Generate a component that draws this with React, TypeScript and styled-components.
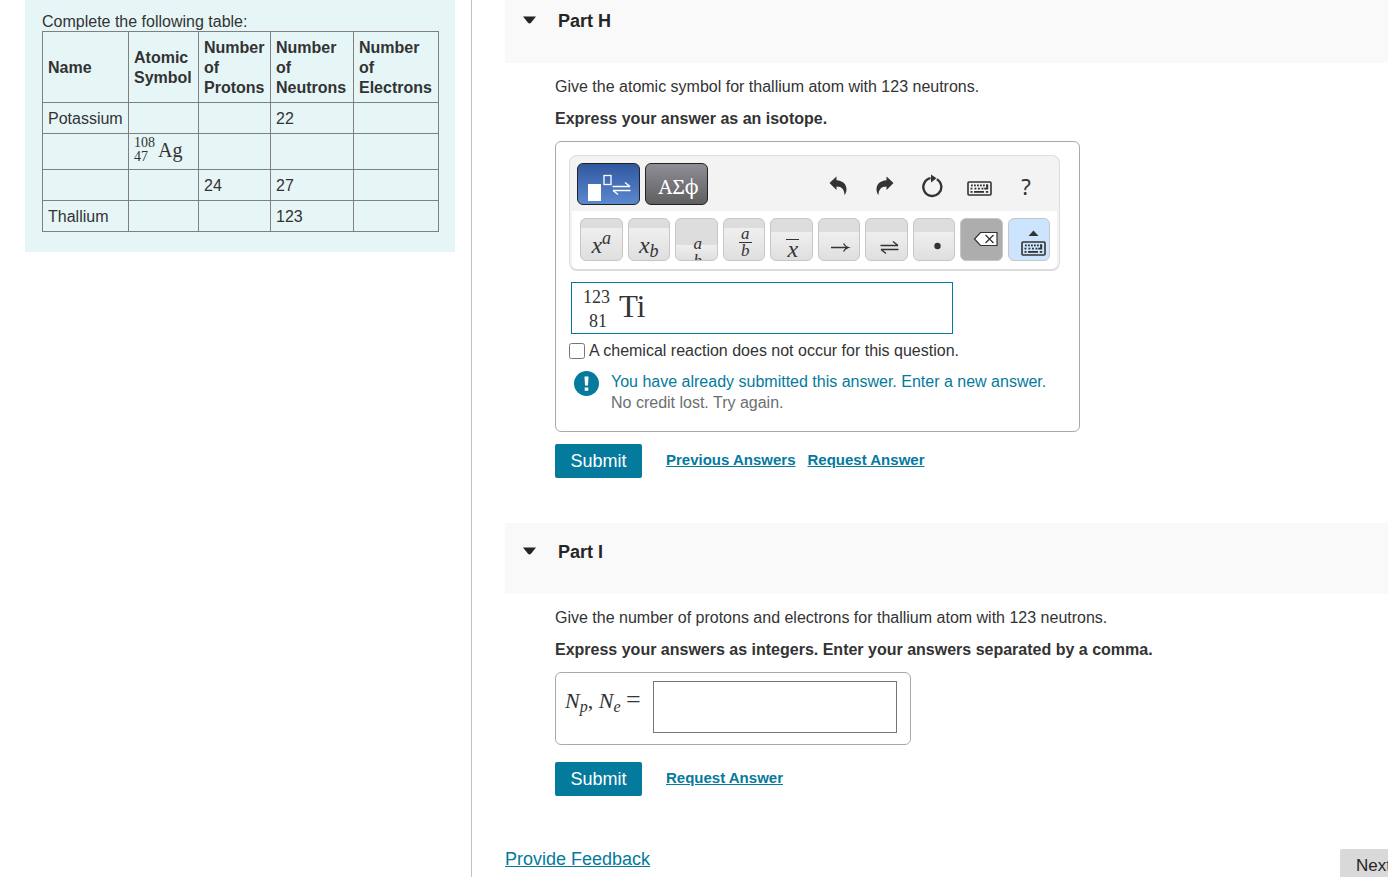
import React from "react";
import styled, { createGlobalStyle, css } from "styled-components";

const TEAL = "#047a9c";
const INK = "#333333";
const SERIF = '"Liberation Serif", "Times New Roman", serif';

const GlobalStyle = createGlobalStyle`
  *, *::before, *::after { box-sizing: border-box; }
  body {
    margin: 0;
    background: #ffffff;
    color: ${INK};
    font-family: "Liberation Sans", Arial, sans-serif;
    font-size: 16px;
    line-height: 20px;
  }
  button, input { font: inherit; color: inherit; }
  p, h2 { margin: 0; }
`;

const Page = styled.div`
  display: flex;
  height: 100vh;
  overflow: hidden;
`;

const Sidebar = styled.aside`
  flex: 0 0 472px;
  padding: 0 16px 0 25px;
  border-right: 1px solid #b9c3ce;
`;

const ProblemPanel = styled.section`
  padding: 12px 16px 20px 17px;
  background: #e6f6f7;
`;

const Intro = styled.p`
  line-height: 19px;
`;

const AtomTable = styled.table`
  width: 100%;
  table-layout: fixed;
  border-collapse: collapse;

  th, td {
    height: 31px;
    padding: 6px 5px 4px;
    border: 1px solid #808080;
    text-align: left;
    vertical-align: middle;
  }
`;

const Col = styled.col<{ $w: number }>`
  width: ${(p) => p.$w}px;
`;

const Isotope = styled.span`
  display: flex;
  align-items: center;
  gap: 3px;
  height: 25px;
  padding-bottom: 5px;
  font-family: ${SERIF};
  font-size: 20px;
`;

const IsotopeNumbers = styled.span`
  display: flex;
  flex-direction: column;
  font-size: 14px;
  line-height: 14px;
`;

const Main = styled.main`
  flex: 1;
  min-width: 0;
  margin-top: -8px;
  padding-left: 33px;
  overflow: hidden;
`;

const PartHeader = styled.header`
  display: flex;
  align-items: flex-start;
  height: 71px;
  padding: 18px;
  background: #f9f9f9;
`;

const PartToggle = styled.button`
  display: flex;
  align-items: center;
  gap: 22px;
  padding: 0;
  border: 0;
  background: none;
  color: #252525;
  font-size: 18px;
  font-weight: bold;
  line-height: 22px;
`;

const PartBody = styled.div`
  padding: 14px 16px 0 50px;
`;

const Prompt = styled.p`
  margin-bottom: 12px;
`;

const Instruction = styled.p`
  margin-bottom: 12px;
  font-weight: bold;
`;

const AnswerBox = styled.div<{ $w: number }>`
  max-width: ${(p) => p.$w}px;
  border: 1px solid #aaaaaa;
  border-radius: 6px;
`;

const EquationBox = styled(AnswerBox)`
  height: 291px;
  padding: 13px 19px 0 13px;
`;

const IntegerBox = styled(AnswerBox)`
  display: flex;
  gap: 12px;
  height: 73px;
  padding: 8px 13px 0 9px;
`;

const Palette = styled.div`
  height: 116px;
  padding: 0 2px;
  border: 1px solid #dddddd;
  border-bottom-width: 2px;
  border-radius: 8px;
  background: #f3f3f3;
`;

const PaletteTop = styled.div`
  display: flex;
  align-items: center;
  gap: 5px;
  height: 55px;
  padding: 0 5px;
`;

const ModeButton = styled.button<{ $active?: boolean }>`
  display: flex;
  justify-content: center;
  width: 63px;
  height: 42px;
  padding: 7px 0 0 4px;
  border: 1px solid #222222;
  border-radius: 6px;
  background: linear-gradient(#8f8d96, #5f5f61);
  color: #ffffff;
  font-family: "Noto Serif", "DejaVu Serif", ${SERIF};
  font-size: 20px;
  line-height: 32px;
  ${(p) =>
    p.$active &&
    css`
      padding: 8px 0 0;
      background: linear-gradient(#30589f, #5c88d0);
    `}
`;

const ToolGroup = styled.div`
  display: flex;
  gap: 7px;
  margin-left: auto;
  padding: 4px 6px 0 0;
`;

const ToolButton = styled.button`
  display: grid;
  place-items: center;
  width: 40px;
  height: 32px;
  padding: 0;
  border: 0;
  background: none;
  font-family: "Noto Sans", sans-serif;
  font-size: 22px;
`;

const PaletteKeys = styled.div`
  display: grid;
  grid-template-columns: repeat(10, 1fr);
  gap: 5px;
  height: 58px;
  padding: 7px 7px 0 8px;
  border-radius: 0 0 6px 6px;
  background: #ffffff;
`;

const Key = styled.button<{ $split?: number; $fill?: string }>`
  display: flex;
  justify-content: center;
  height: 43px;
  padding: 0;
  overflow: hidden;
  border: 1px solid #c6c6c6;
  border-radius: 6px;
  background: ${(p) =>
    p.$fill ??
    `linear-gradient(#dddddd ${p.$split ?? 13}px, #efefef ${p.$split ?? 13}px, #dfdfdf)`};
  font-family: ${SERIF};
  font-style: italic;
  font-size: 24px;

  sup, sub { font-size: 18px; line-height: 0; }
  sub { vertical-align: -4px; }
`;

const KeyLabel = styled.span`
  padding-top: 16px;
`;

const Fraction = styled.span<{ $bar?: boolean; $top: number }>`
  display: flex;
  flex-direction: column;
  align-items: center;
  width: 13px;
  margin: ${(p) => p.$top}px 0 0 3px;
  font-size: 17px;
  line-height: 16px;

  span + span {
    width: 100%;
    border-top: 1px solid ${(p) => (p.$bar ? INK : "transparent")};
  }
`;

const BarredLetter = styled.span`
  font-size: 24px;
  line-height: 18px;
`;

const KeyIcon = styled.svg`
  flex: none;
`;

const EquationField = styled.div`
  display: flex;
  gap: 9px;
  max-width: 382px;
  height: 52px;
  margin: 11px 0 0 2px;
  padding: 2px 11px;
  border: 1px solid ${TEAL};
  font-family: ${SERIF};
  font-size: 31px;
  line-height: 44px;
`;

const FieldNumbers = styled.span`
  display: flex;
  flex-direction: column;
  align-items: flex-end;
  font-size: 18px;
  line-height: 24px;

  span + span { padding-right: 3px; }
`;

const CheckRow = styled.label`
  display: flex;
  align-items: center;
  gap: 4px;
  margin-top: 7px;

  input { width: 16px; height: 16px; margin: 0; }
`;

const Feedback = styled.div`
  display: flex;
  gap: 12px;
  margin: 10px 0 0 5px;
  line-height: 21px;
  color: ${TEAL};

  svg { flex: none; }
`;

const FeedbackNote = styled.p`
  color: #6a7070;
`;

const Actions = styled.div<{ $top: number; $bottom: number }>`
  display: flex;
  align-items: center;
  margin: ${(p) => p.$top}px 0 ${(p) => p.$bottom}px;
`;

const SubmitButton = styled.button`
  width: 87px;
  height: 34px;
  margin-right: 24px;
  padding: 0;
  border: 0;
  border-radius: 2px;
  background: ${TEAL};
  color: #ffffff;
  font-size: 18px;
`;

const ActionLink = styled.a`
  margin-right: 12px;
  padding-bottom: 2px;
  color: ${TEAL};
  font-size: 15px;
  font-weight: bold;
`;

const MathLabel = styled.label`
  padding-top: 7px;
  font-family: ${SERIF};
  font-size: 22px;
  line-height: 26px;
  white-space: nowrap;

  sub { font-size: 16px; line-height: 0; vertical-align: -4px; }
`;

const EqualsSign = styled.span`
  font-size: 26px;
  line-height: 0;
`;

const IntegerInput = styled.input`
  flex: 1;
  min-width: 0;
  height: 52px;
  padding: 0 8px;
  border: 1px solid #767676;
  background: #ffffff;
`;

const Footer = styled.footer`
  display: flex;
  justify-content: space-between;
  align-items: flex-start;
  margin-right: -38px;
`;

const FeedbackLink = styled.a`
  color: ${TEAL};
  font-size: 18px;
`;

const NextButton = styled.button`
  width: 86px;
  height: 34px;
  padding: 0 16px;
  border: 0;
  border-radius: 2px;
  background: #d9d9d9;
  color: #252525;
  font-size: 17px;
  text-align: left;
  white-space: nowrap;
`;

const Keyboard = ({ x = 0, y = 0 }: { x?: number; y?: number }) => (
  <g transform={`translate(${x} ${y})`} fill={INK}>
    <rect x="1" y="1" width="23" height="13" rx="1" fill="none" stroke={INK} strokeWidth="1.6" />
    {[4, 7, 10, 13, 16, 19].map((k) => (
      <rect key={k} x={k} y="3.5" width="1.8" height="1.8" />
    ))}
    {[3.5, 7.5, 11, 14.5].map((k) => (
      <rect key={k} x={k} y="6.7" width="1.9" height="1.8" />
    ))}
    <path d="M19.2 3.5h2v5h-4v-1.8h2z" />
    <rect x="3.5" y="10" width="2" height="1.8" />
    <rect x="7" y="10" width="10" height="1.8" />
    <rect x="18.8" y="10" width="2.4" height="1.8" />
  </g>
);

const CurvedArrow = ({ flip }: { flip?: boolean }) => (
  <svg width="18" height="20" viewBox="0 0 18 20" aria-hidden="true">
    <path
      transform={flip ? "translate(18 0) scale(-1 1)" : undefined}
      d="M0.5 7 7.5 0.5v3.8c6.5 0.4 10 4 10 9.2 0 2.2-.8 4.2-2 5.5-.2-5.5-2.5-8.2-8-8.4v3.400z"
      fill={INK}
    />
  </svg>
);

const Harpoons = ({ x, y, color }: { x: number; y: number; color: string }) => (
  <g transform={`translate(${x} ${y})`} stroke={color} strokeWidth="1.4" fill="none">
    <path d="M0.5 4.5H18M13 0.5 18 4.5M18.500 8.500H1M6 12.500 1 8.500" />
  </g>
);

const PartTitle = ({ children }: { children: React.ReactNode }) => (
  <PartHeader>
    <h2>
      <PartToggle type="button" aria-expanded="true">
        <svg width="13" height="10" viewBox="0 0 13 10" aria-hidden="true">
          <path d="M0 .5h13L8 6.800q-1.500 1.400-3 0z" fill="#252525" />
        </svg>
        {children}
      </PartToggle>
    </h2>
  </PartHeader>
);

const rows: React.ReactNode[][] = [
  ["Potassium", "", "", "22", ""],
  [
    "",
    <Isotope>
      <IsotopeNumbers>
        <span>108</span>
        <span>47</span>
      </IsotopeNumbers>
      Ag
    </Isotope>,
    "",
    "",
    "",
  ],
  ["", "", "24", "27", ""],
  ["Thallium", "", "", "123", ""],
];

const headings = ["Name", "Atomic Symbol", "Number of Protons", "Number of Neutrons", "Number of Electrons"];

export default function App() {
  return (
    <>
      <GlobalStyle />
      <Page>
        <Sidebar>
          <ProblemPanel>
            <Intro>Complete the following table:</Intro>
            <AtomTable>
              <colgroup>
                {[86, 70, 72, 83, 85].map((w, i) => (
                  <Col key={i} $w={w} />
                ))}
              </colgroup>
              <thead>
                <tr>
                  {headings.map((h) => (
                    <th key={h} scope="col">{h}</th>
                  ))}
                </tr>
              </thead>
              <tbody>
                {rows.map((cells, r) => (
                  <tr key={r}>
                    {cells.map((c, i) => (
                      <td key={i}>{c}</td>
                    ))}
                  </tr>
                ))}
              </tbody>
            </AtomTable>
          </ProblemPanel>
        </Sidebar>

        <Main>
          <PartTitle>Part H</PartTitle>
          <PartBody>
            <Prompt>Give the atomic symbol for thallium atom with 123 neutrons.</Prompt>
            <Instruction>Express your answer as an isotope.</Instruction>
            <EquationBox $w={525}>
              <Palette>
                <PaletteTop>
                  <ModeButton type="button" $active aria-label="Templates">
                    <KeyIcon width="61" height="32" aria-hidden="true">
                      <rect x="10" y="12" width="13" height="17" fill="#fff" />
                      <rect x="26" y="3.500" width="7" height="9" fill="none" stroke="#fff" strokeWidth="1.300" />
                      <Harpoons x={34} y={10} color="#fff" />
                    </KeyIcon>
                  </ModeButton>
                  <ModeButton type="button">ΑΣϕ</ModeButton>
                  <ToolGroup>
                    <ToolButton type="button" aria-label="Undo"><CurvedArrow /></ToolButton>
                    <ToolButton type="button" aria-label="Redo"><CurvedArrow flip /></ToolButton>
                    <ToolButton type="button" aria-label="Reset">
                      <svg width="22" height="24" viewBox="0 0 22 24" aria-hidden="true">
                        <path d="M15.800 5.200A9 9 0 1 1 9.500 4.200" fill="none" stroke={INK} strokeWidth="2.400" />
                        <path d="M10 .5 15.500 4.300 10 8.500z" fill={INK} />
                      </svg>
                    </ToolButton>
                    <ToolButton type="button" aria-label="Keyboard shortcuts">
                      <svg width="25" height="21" aria-hidden="true"><Keyboard y={6} /></svg>
                    </ToolButton>
                    <ToolButton type="button" aria-label="Help">?</ToolButton>
                  </ToolGroup>
                </PaletteTop>
                <PaletteKeys>
                  <Key type="button" $split={9}><KeyLabel>x<sup>a</sup></KeyLabel></Key>
                  <Key type="button" $split={9}><KeyLabel>x<sub>b</sub></KeyLabel></Key>
                  <Key type="button" $split={26}>
                    <Fraction $top={17}><span>a</span><span>b</span></Fraction>
                  </Key>
                  <Key type="button" $split={9}>
                    <Fraction $top={7} $bar><span>a</span><span>b</span></Fraction>
                  </Key>
                  <Key type="button">
                    <Fraction $top={4} $bar><span>&nbsp;</span><BarredLetter>x</BarredLetter></Fraction>
                  </Key>
                  <Key type="button" aria-label="Right arrow">
                    <KeyIcon width="40" height="42" aria-hidden="true">
                      <path d="M12 28.500h17M24.500 24.500q1.500 3 5 4-3.500 1-5 4" fill="none" stroke={INK} strokeWidth="1.300" />
                    </KeyIcon>
                  </Key>
                  <Key type="button" aria-label="Equilibrium arrows">
                    <KeyIcon width="40" height="42" aria-hidden="true"><Harpoons x={14} y={22} color={INK} /></KeyIcon>
                  </Key>
                  <Key type="button" aria-label="Dot">
                    <KeyIcon width="40" height="42" aria-hidden="true"><circle cx="23.500" cy="27" r="3.200" fill={INK} /></KeyIcon>
                  </Key>
                  <Key type="button" $fill="#adadad" aria-label="Delete">
                    <KeyIcon width="40" height="42" aria-hidden="true">
                      <path d="M19.500 13.500H36v13H19.500l-6-6.500z" fill="#fff" stroke={INK} strokeWidth="1.200" />
                      <path d="m24.500 16 8 8m0-8-8 8" stroke={INK} strokeWidth="1.300" />
                    </KeyIcon>
                  </Key>
                  <Key type="button" $fill="#cce4fe" aria-label="Show keyboard">
                    <KeyIcon width="40" height="42" aria-hidden="true">
                      <path d="m19.500 17 5-5.500 5 5.500z" fill={INK} />
                      <Keyboard x={12} y={22} />
                    </KeyIcon>
                  </Key>
                </PaletteKeys>
              </Palette>
              <EquationField role="textbox" tabIndex={0} aria-label="Isotope answer">
                <FieldNumbers>
                  <span>123</span>
                  <span>81</span>
                </FieldNumbers>
                Ti
              </EquationField>
              <CheckRow>
                <input type="checkbox" />
                A chemical reaction does not occur for this question.
              </CheckRow>
              <Feedback role="status">
                <svg width="25" height="25" viewBox="0 0 25 25" aria-hidden="true">
                  <circle cx="12.5" cy="12.5" r="12.5" fill={TEAL} />
                  <path d="M10.500 5.500h4l-.5 9h-3zM10.700 16.500h3.600v3.300h-3.600z" fill="#fff" />
                </svg>
                <div>
                  <p>You have already submitted this answer. Enter a new answer.</p>
                  <FeedbackNote>No credit lost. Try again.</FeedbackNote>
                </div>
              </Feedback>
            </EquationBox>
            <Actions $top={12} $bottom={45}>
              <SubmitButton type="button">Submit</SubmitButton>
              <ActionLink href="#previous">Previous Answers</ActionLink>
              <ActionLink href="#request-h">Request Answer</ActionLink>
            </Actions>
          </PartBody>

          <PartTitle>Part I</PartTitle>
          <PartBody>
            <Prompt>Give the number of protons and electrons for thallium atom with 123 neutrons.</Prompt>
            <Instruction>Express your answers as integers. Enter your answers separated by a comma.</Instruction>
            <IntegerBox $w={356}>
              <MathLabel htmlFor="particles">
                <i>N</i><sub><i>p</i></sub>, <i>N</i><sub><i>e</i></sub> <EqualsSign>=</EqualsSign>
              </MathLabel>
              <IntegerInput id="particles" type="text" />
            </IntegerBox>
            <Actions $top={17} $bottom={53}>
              <SubmitButton type="button">Submit</SubmitButton>
              <ActionLink href="#request-i">Request Answer</ActionLink>
            </Actions>
          </PartBody>

          <Footer>
            <FeedbackLink href="#feedback">Provide Feedback</FeedbackLink>
            <NextButton type="button">Next &gt;</NextButton>
          </Footer>
        </Main>
      </Page>
    </>
  );
}
